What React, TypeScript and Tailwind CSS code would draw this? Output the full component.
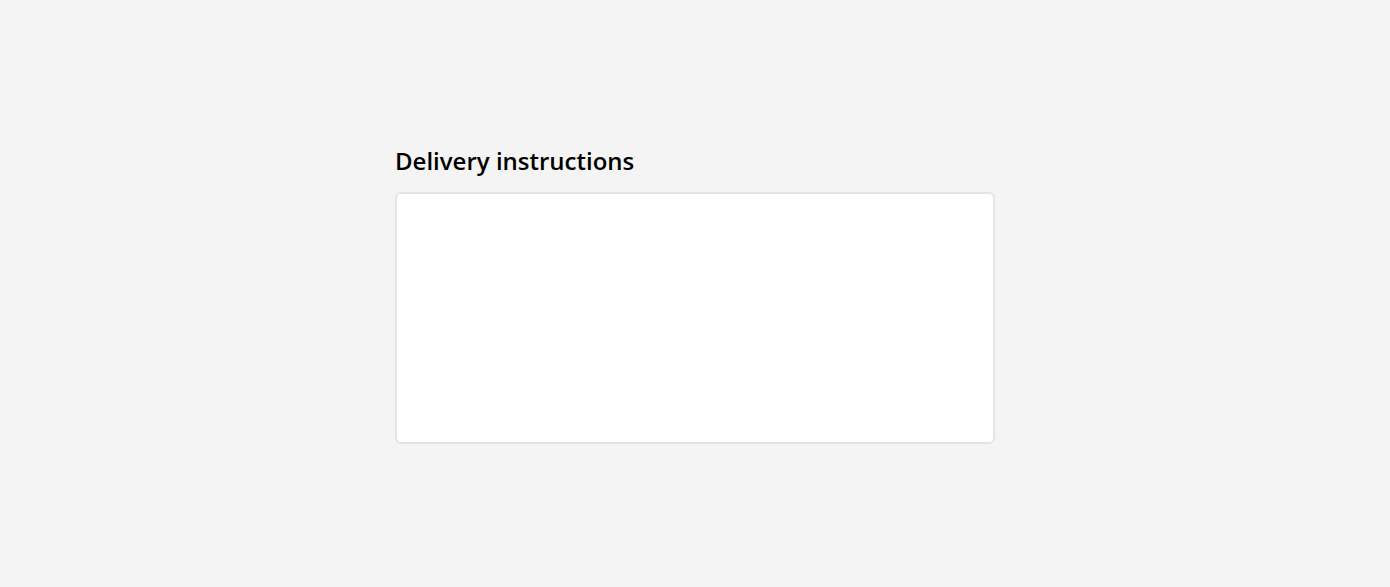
export default function App() {
  return (
    <div className="flex h-screen w-full items-center justify-center bg-[#f4f4f4] font-['Open_Sans',sans-serif]">
      <div className="flex w-[600px] flex-col pt-[2px]">
        <label htmlFor="instructions" className="mb-[15px] text-[24px] leading-[32px] font-semibold text-black">
          Delivery instructions
        </label>
        <textarea
          id="instructions"
          className="h-[252px] w-full resize-none rounded-md border-2 border-[#e4e4e4] bg-white p-3 outline-none"
        />
      </div>
    </div>
  );
}
